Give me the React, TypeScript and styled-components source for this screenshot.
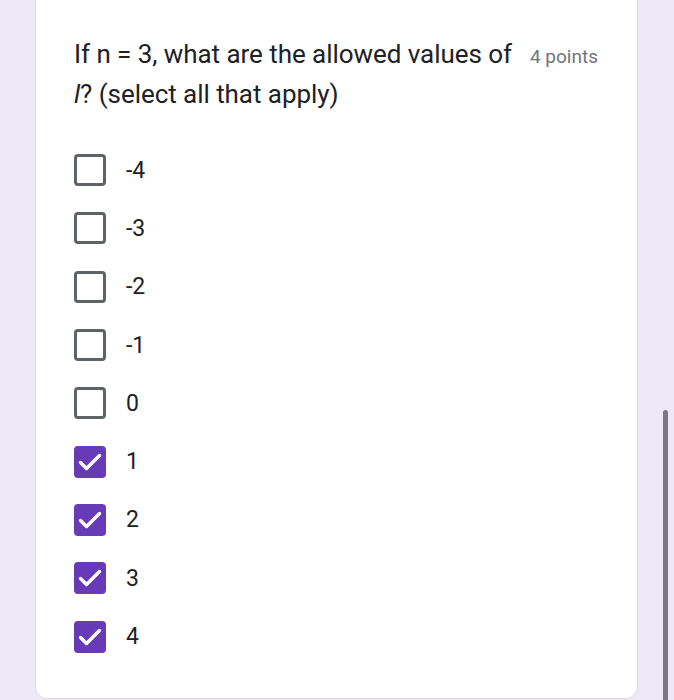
import React from "react";
import styled, { createGlobalStyle } from "styled-components";

const Global = createGlobalStyle`
  html, body { margin: 0; padding: 0; }
  body {
    background: #ede9f7;
    font-family: Roboto, "Noto Sans", Arial, sans-serif;
    color: #202124;
    overflow: hidden;
  }
`;

const Page = styled.div`
  height: 700px;
  overflow: hidden;
  position: relative;
`;

const Card = styled.div`
  margin: -12px 0 0 35px;
  width: 603px;
  height: 711px;
  box-sizing: border-box;
  background: #fff;
  border: 1px solid #dcd9e3;
  border-radius: 12px;
  padding: 45px 38px 0 38px;
`;

const Header = styled.div`
  display: flex;
  align-items: flex-start;
  justify-content: space-between;
`;

const Title = styled.div`
  font-size: 26px;
  line-height: 40px;
  width: 448px;
  letter-spacing: -0.05px;
  color: #202124;
`;

const Points = styled.div`
  font-size: 19px;
  line-height: 40px;
  padding-top: 3px;
  color: #70757a;
  white-space: nowrap;
  margin-right: 1px;
`;

const List = styled.div`
  margin-top: 27px;
  display: flex;
  flex-direction: column;
`;

const Row = styled.div`
  height: 58.3px;
  display: flex;
  align-items: center;
  gap: 20px;
`;

const Box = styled.div<{ $checked: boolean }>`
  width: 32px;
  height: 32px;
  box-sizing: border-box;
  border-radius: 4px;
  border: ${(p) => (p.$checked ? "none" : "3px solid #5f6368")};
  background: ${(p) => (p.$checked ? "#673ab7" : "#fff")};
  display: flex;
  align-items: center;
  justify-content: center;
`;

const Label = styled.span`
  font-size: 23px;
  color: #202124;
`;

const Scrollbar = styled.div`
  position: absolute;
  left: 663px;
  top: 410px;
  width: 5px;
  height: 300px;
  border-radius: 3px;
  background: #7b7886;
`;

const Check = () => (
  <svg width="24" height="24" viewBox="0 0 24 24">
    <path d="M2.5 12.5l6 6L21.5 5.5" fill="none" stroke="#fff" strokeWidth="3.4" strokeLinecap="round" strokeLinejoin="round" />
  </svg>
);

const options = [
  { v: "-4", c: false },
  { v: "-3", c: false },
  { v: "-2", c: false },
  { v: "-1", c: false },
  { v: "0", c: false },
  { v: "1", c: true },
  { v: "2", c: true },
  { v: "3", c: true },
  { v: "4", c: true },
];

export default function App() {
  return (
    <Page>
      <Global />
      <Card>
        <Header>
          <Title>
            If n = 3, what are the allowed values of <i>l</i>? (select all that apply)
          </Title>
          <Points>4 points</Points>
        </Header>
        <List>
          {options.map((o) => (
            <Row key={o.v}>
              <Box $checked={o.c}>{o.c && <Check />}</Box>
              <Label>{o.v}</Label>
            </Row>
          ))}
        </List>
      </Card>
      <Scrollbar />
    </Page>
  );
}
